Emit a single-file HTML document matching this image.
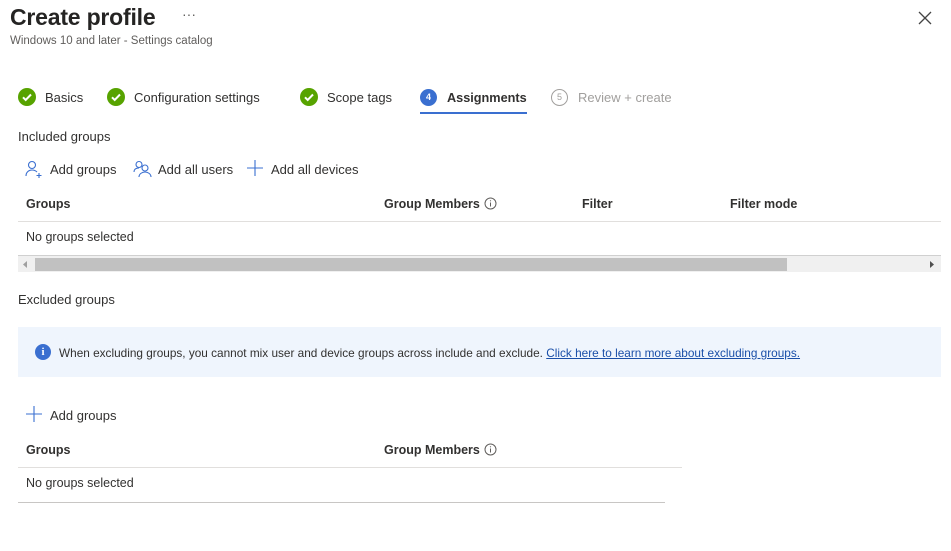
<!DOCTYPE html>
<html><head><meta charset="utf-8"><style>
*{margin:0;padding:0;box-sizing:border-box}
body{width:951px;height:551px;background:#fff;font-family:"Liberation Sans",sans-serif;color:#323130;position:relative;overflow:hidden;font-size:13px}
.a{position:absolute;white-space:nowrap}
.chk{position:absolute;width:18px;height:18px;border-radius:50%;background:#57a300}
.chk svg{position:absolute;left:0;top:0}
.t{font-size:13px;line-height:18px}
.h{font-weight:bold;font-size:12.5px}
.line{position:absolute;height:1px;background:#e1dfdd}
</style></head><body>
<div class="a" style="left:10px;top:4px;font-size:23px;font-weight:bold;color:#252423;letter-spacing:-0.2px">Create profile</div>
<div class="a" style="left:182px;top:6px;font-size:14px;color:#605e5c">···</div>
<div class="a" style="left:10px;top:35px;font-size:11.5px;color:#605e5c">Windows 10 and later - Settings catalog</div>
<svg class="a" style="left:918px;top:11px" width="14" height="14"><path d="M1 1L13 13M13 1L1 13" stroke="#444" stroke-width="1.3"/></svg>

<div class="chk" style="left:18px;top:88px"><svg width="18" height="18"><path d="M5 9.3l2.7 2.7 5.3-5.5" stroke="#fff" stroke-width="2" fill="none"/></svg></div>
<div class="a t" style="left:45px;top:89px">Basics</div>
<div class="chk" style="left:107px;top:88px"><svg width="18" height="18"><path d="M5 9.3l2.7 2.7 5.3-5.5" stroke="#fff" stroke-width="2" fill="none"/></svg></div>
<div class="a t" style="left:134px;top:89px">Configuration settings</div>
<div class="chk" style="left:300px;top:88px"><svg width="18" height="18"><path d="M5 9.3l2.7 2.7 5.3-5.5" stroke="#fff" stroke-width="2" fill="none"/></svg></div>
<div class="a t" style="left:327px;top:89px">Scope tags</div>
<div class="a" style="left:420px;top:89px;width:17px;height:17px;border-radius:50%;background:#3a6fd0;color:#fff;font-size:9px;font-weight:bold;text-align:center;line-height:17px">4</div>
<div class="a t" style="left:447px;top:89px;font-weight:bold;font-size:12.7px">Assignments</div>
<div class="a" style="left:420px;top:112px;width:107px;height:2px;background:#3a6fd0"></div>
<div class="a" style="left:551px;top:89px;width:17px;height:17px;border-radius:50%;border:1px solid #a19f9d;color:#a19f9d;font-size:9px;text-align:center;line-height:15px">5</div>
<div class="a t" style="left:578px;top:89px;color:#a19f9d">Review + create</div>

<div class="a t" style="left:18px;top:128px">Included groups</div>
<svg class="a" style="left:25px;top:160px" width="18" height="18"><circle cx="7" cy="5" r="3.5" fill="none" stroke="#3a6fd0" stroke-width="1.1"/><path d="M1 16c0-4 3-6 6-6s4 1 5 2" fill="none" stroke="#3a6fd0" stroke-width="1.1"/><path d="M14 13v5M11.5 15.5h5" stroke="#3a6fd0" stroke-width="1.1"/></svg>
<div class="a t" style="left:50px;top:161px">Add groups</div>
<svg class="a" style="left:133px;top:160px" width="20" height="18"><circle cx="6" cy="4.5" r="3" fill="none" stroke="#3a6fd0" stroke-width="1.1"/><circle cx="12" cy="8" r="3" fill="none" stroke="#3a6fd0" stroke-width="1.1"/><path d="M1 12c0-3 2-4 5-4M6 17c0-3 3-5 6-5s6 2 6 5" fill="none" stroke="#3a6fd0" stroke-width="1.1"/></svg>
<div class="a t" style="left:158px;top:161px">Add all users</div>
<svg class="a" style="left:247px;top:160px" width="16" height="16"><path d="M8 0v16M0 8h16" stroke="#3a6fd0" stroke-width="1.1"/></svg>
<div class="a t" style="left:271px;top:161px">Add all devices</div>

<div class="a h" style="left:26px;top:197px">Groups</div>
<div class="a h" style="left:384px;top:197px">Group Members</div>
<svg class="a" style="left:484px;top:197px" width="13" height="13"><circle cx="6.5" cy="6.5" r="5.5" fill="none" stroke="#605e5c"/><path d="M6.5 5.5v4" stroke="#605e5c"/><circle cx="6.5" cy="3.8" r=".6" fill="#605e5c"/></svg>
<div class="a h" style="left:582px;top:197px">Filter</div>
<div class="a h" style="left:730px;top:197px">Filter mode</div>
<div class="line" style="left:18px;top:221px;width:923px"></div>
<div class="a t" style="left:26px;top:228px;font-size:12.5px">No groups selected</div>
<div class="a" style="left:18px;top:255px;width:923px;height:1px;background:#d0d0d0"></div>
<div class="a" style="left:18px;top:256px;width:923px;height:16px;background:#f0f0f0"></div>
<div class="a" style="left:35px;top:258px;width:752px;height:13px;background:#c1c1c1"></div>
<svg class="a" style="left:23px;top:261px" width="5" height="7"><path d="M4 0v7L0 3.5z" fill="#a0a0a0"/></svg>
<svg class="a" style="left:930px;top:261px" width="5" height="7"><path d="M0 0v7l4-3.5z" fill="#505050"/></svg>

<div class="a t" style="left:18px;top:291px">Excluded groups</div>
<div class="a" style="left:18px;top:327px;width:923px;height:50px;background:#eff5fd"></div>
<div class="a" style="left:35px;top:344px;width:16px;height:16px;border-radius:50%;background:#3a6fd0;color:#fff;font-weight:bold;font-size:11px;text-align:center;line-height:16px;font-family:'Liberation Serif',serif">i</div>
<div class="a" style="left:59px;top:346px;font-size:11.8px">When excluding groups, you cannot mix user and device groups across include and exclude. <span style="text-decoration:underline;color:#1a4fa8">Click here to learn more about excluding groups.</span></div>

<svg class="a" style="left:26px;top:406px" width="16" height="16"><path d="M8 0v16M0 8h16" stroke="#3a6fd0" stroke-width="1.1"/></svg>
<div class="a t" style="left:50px;top:407px">Add groups</div>
<div class="a h" style="left:26px;top:443px">Groups</div>
<div class="a h" style="left:384px;top:443px">Group Members</div>
<svg class="a" style="left:484px;top:443px" width="13" height="13"><circle cx="6.5" cy="6.5" r="5.5" fill="none" stroke="#605e5c"/><path d="M6.5 5.5v4" stroke="#605e5c"/><circle cx="6.5" cy="3.8" r=".6" fill="#605e5c"/></svg>
<div class="line" style="left:18px;top:467px;width:664px"></div>
<div class="a t" style="left:26px;top:474px;font-size:12.5px">No groups selected</div>
<div class="a" style="left:18px;top:502px;width:647px;height:1px;background:#c8c6c4"></div>
</body></html>
